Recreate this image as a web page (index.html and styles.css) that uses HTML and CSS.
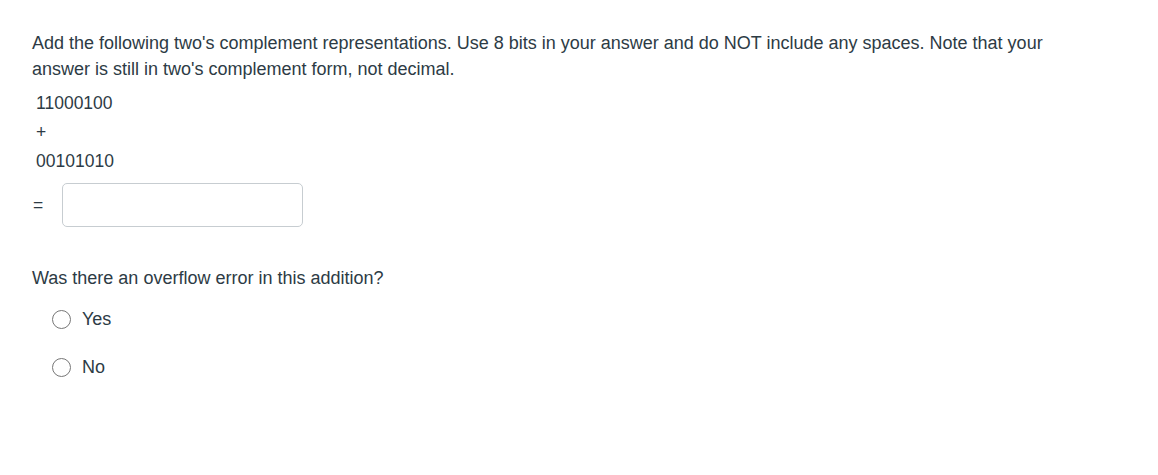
FILE: index.html
```html
<!DOCTYPE html>
<html>
<head>
<meta charset="utf-8">
<link rel="stylesheet" href="styles.css">
</head>
<body>
<div class="question">
  <p class="prompt">Add the following two's complement representations. Use 8 bits in your answer and do NOT include any spaces. Note that your answer is still in two's complement form, not decimal.</p>
  <div class="sum">
    <div class="num">11000100</div>
    <div class="op">+</div>
    <div class="num">00101010</div>
    <div class="answer-row">
      <span class="eq">=</span>
      <input class="answer" type="text">
    </div>
  </div>
  <p class="prompt q2">Was there an overflow error in this addition?</p>
  <div class="options">
    <label class="opt"><input type="radio" name="ov"><span>Yes</span></label>
    <label class="opt"><input type="radio" name="ov"><span>No</span></label>
  </div>
</div>
</body>
</html>
```
FILE: styles.css
```css
html, body {
  margin: 0;
  padding: 0;
  background: #ffffff;
}
body {
  font-family: "Liberation Sans", Arial, sans-serif;
  font-size: 18px;
  color: #2d3b45;
}
.question {
  padding: 30px 32px;
  width: 1040px;
}
.prompt {
  margin: 0;
  line-height: 26px;
}
.sum {
  margin-top: 7px;
  padding-left: 4px;
  font-size: 17.5px;
}
.num, .op {
  line-height: 29px;
  height: 29px;
}
.answer-row {
  display: flex;
  align-items: center;
  margin-top: 7px;
  margin-left: -3px;
}
.eq {
  width: 29px;
}
.answer {
  box-sizing: border-box;
  width: 241px;
  height: 44px;
  border: 1px solid #c7cdd1;
  border-radius: 5px;
  margin: 0;
  padding: 0 10px;
  font: inherit;
}
.q2 {
  margin-top: 38px;
}
.options {
  margin-top: 16px;
  padding-left: 20px;
  display: flex;
  flex-direction: column;
  gap: 23px;
}
.opt {
  display: flex;
  align-items: center;
  gap: 11px;
  line-height: 25px;
}
.opt input {
  margin: 0;
  width: 19px;
  height: 19px;
}
```
